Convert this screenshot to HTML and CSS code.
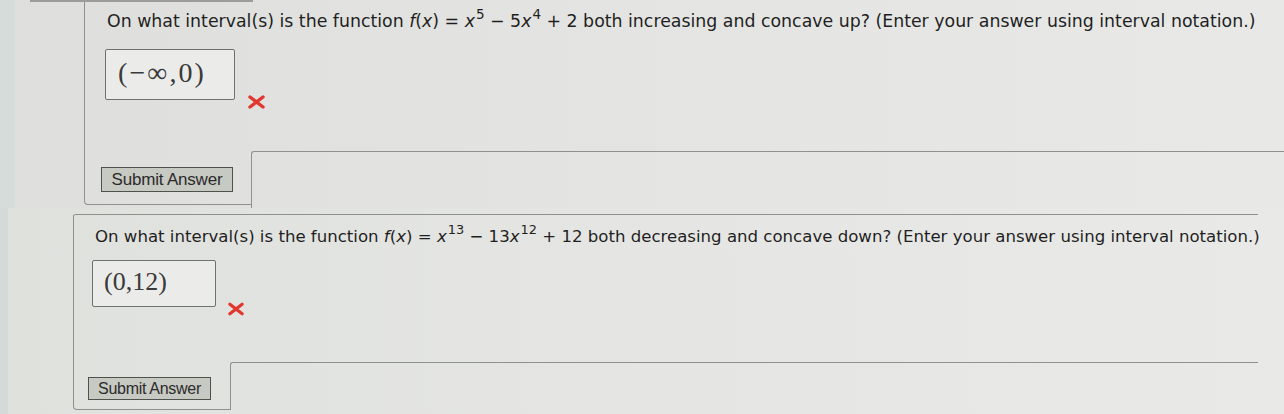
FILE: index.html
```html
<!DOCTYPE html>
<html>
<head>
<meta charset="utf-8">
<link rel="stylesheet" href="styles.css">
</head>
<body>
<div class="panel panel-top">
  <div class="gutter gutter-top"></div>
  <div class="panel-main">
    <div class="prev-bar"></div>
    <div class="qbox qbox-top">
      <div class="q-upper">
        <p class="q-text">On what interval(s) is the function <i>f</i>(<i>x</i>) = <i>x</i><sup>5</sup> − 5<i>x</i><sup>4</sup> + 2 both increasing and concave up? (Enter your answer using interval notation.)</p>
        <div class="answer-row">
          <div class="answer">(−∞,0)</div>
          <svg class="xmark" width="17" height="14" viewBox="0 0 17 14"><path d="M2 2 L15 12 M15 2 L2 12" stroke="#e2372f" stroke-width="3.4" stroke-linecap="round"/></svg>
        </div>
      </div>
      <div class="q-footer">
        <div class="btn-cell"><button class="submit">Submit Answer</button></div>
        <div class="rest"></div>
      </div>
    </div>
  </div>
</div>
<div class="panel panel-bottom">
  <div class="gutter gutter-bottom"></div>
  <div class="panel-main">
    <div class="qbox qbox-bottom">
      <div class="q-upper">
        <p class="q-text">On what interval(s) is the function <i>f</i>(<i>x</i>) = <i>x</i><sup>13</sup> − 13<i>x</i><sup>12</sup> + 12 both decreasing and concave down? (Enter your answer using interval notation.)</p>
        <div class="answer-row">
          <div class="answer">(0,12)</div>
          <svg class="xmark" width="17" height="14" viewBox="0 0 17 14"><path d="M2 2 L15 12 M15 2 L2 12" stroke="#e2372f" stroke-width="3.4" stroke-linecap="round"/></svg>
        </div>
      </div>
      <div class="q-footer">
        <div class="btn-cell"><button class="submit">Submit Answer</button></div>
        <div class="rest"></div>
      </div>
    </div>
  </div>
</div>
</body>
</html>
```
FILE: styles.css
```css
html, body {
  margin: 0;
  padding: 0;
}
body {
  width: 1284px;
  height: 414px;
  overflow: hidden;
  background: #e3e4e1;
  font-family: "DejaVu Sans", Verdana, sans-serif;
  color: #1f1f1f;
}
.panel {
  display: flex;
}
.panel-top {
  height: 208px;
  background: linear-gradient(90deg, #dedfdc 0%, #e4e5e2 50%, #e8e9e7 100%);
}
.panel-bottom {
  height: 206px;
  background: linear-gradient(90deg, #dfe1dd 0%, #e5e6e3 50%, #e9eae8 100%);
}
.gutter {
  flex-shrink: 0;
}
.gutter-top {
  width: 15px;
  background: #d6dcd9;
}
.gutter-bottom {
  width: 8px;
  background: #d4dad7;
}
.panel-main {
  flex: 1;
  min-width: 0;
  display: flex;
  flex-direction: column;
}
.prev-bar {
  height: 3px;
  width: 223px;
  margin-left: 15px;
  background: #9b9d98;
}
.qbox {
  display: flex;
  flex-direction: column;
}
.qbox-top {
  margin-left: 69px;
}
.qbox-bottom {
  margin-left: 65px;
  margin-top: 6px;
  border-top: 1px solid #8f918d;
  border-top-left-radius: 3px;
  margin-right: 26px;
}
.q-upper {
  border-left: 1px solid #8f918d;
  padding-left: 22px;
}
.qbox-top .q-upper {
  height: 149px;
}
.qbox-bottom .q-upper {
  height: 147px;
  padding-left: 21px;
}
.q-text {
  margin: 0;
  line-height: 20px;
  white-space: nowrap;
}
.qbox-top .q-text {
  font-size: 17.35px;
  padding-top: 9px;
}
.qbox-bottom .q-text {
  font-size: 16.58px;
  padding-top: 12px;
}
.q-text i {
  font-style: italic;
}
.q-text sup {
  font-size: 0.78em;
  line-height: 0;
  vertical-align: 0.62em;
  margin-left: 1px;
}
.answer-row {
  display: flex;
  align-items: flex-start;
}
.qbox-top .answer-row {
  margin-top: 18px;
  margin-left: -2px;
}
.qbox-bottom .answer-row {
  margin-top: 13px;
  margin-left: -3px;
}
.answer {
  box-sizing: border-box;
  border: 1px solid #6f716d;
  border-radius: 2px;
  background: #ebecea;
  font-family: "Liberation Serif", "Times New Roman", serif;
  color: #3a3a3a;
  display: flex;
  align-items: center;
}
.qbox-top .answer {
  width: 130px;
  height: 51px;
  padding-left: 12px;
  padding-bottom: 4px;
  font-size: 28px;
  letter-spacing: 2.1px;
}
.qbox-bottom .answer {
  width: 124px;
  height: 47px;
  padding-left: 11px;
  padding-bottom: 3px;
  font-size: 26px;
  letter-spacing: 0;
}
.xmark {
  display: block;
}
.qbox-top .xmark {
  margin-left: 13px;
  margin-top: 46px;
}
.qbox-bottom .xmark {
  margin-left: 12px;
  margin-top: 42px;
  width: 16px;
}
.q-footer {
  display: flex;
}
.btn-cell {
  border-left: 1px solid #8f918d;
  border-bottom: 1px solid #8f918d;
  border-bottom-left-radius: 4px;
  box-sizing: border-box;
}
.qbox-top .btn-cell {
  width: 167px;
  height: 54px;
  padding: 16px 0 0 16px;
}
.qbox-bottom .btn-cell {
  width: 157px;
  height: 48px;
  padding: 15px 0 0 14px;
}
.rest {
  flex: 1;
  border-left: 1px solid #8f918d;
  border-top: 1px solid #8f918d;
  border-top-left-radius: 3px;
}
.qbox-top .rest {
  height: 56px;
}
.submit {
  box-sizing: border-box;
  margin: 0;
  border: 1px solid #4f514d;
  background: #c7c9c3;
  font-family: "Liberation Sans", Arial, sans-serif;
  color: #2b2b2b;
  padding: 0;
  display: block;
}
.qbox-top .submit {
  width: 132px;
  height: 25px;
  font-size: 17px;
  letter-spacing: -0.2px;
}
.qbox-bottom .submit {
  width: 123px;
  height: 23px;
  font-size: 16px;
  letter-spacing: -0.3px;
}
```
